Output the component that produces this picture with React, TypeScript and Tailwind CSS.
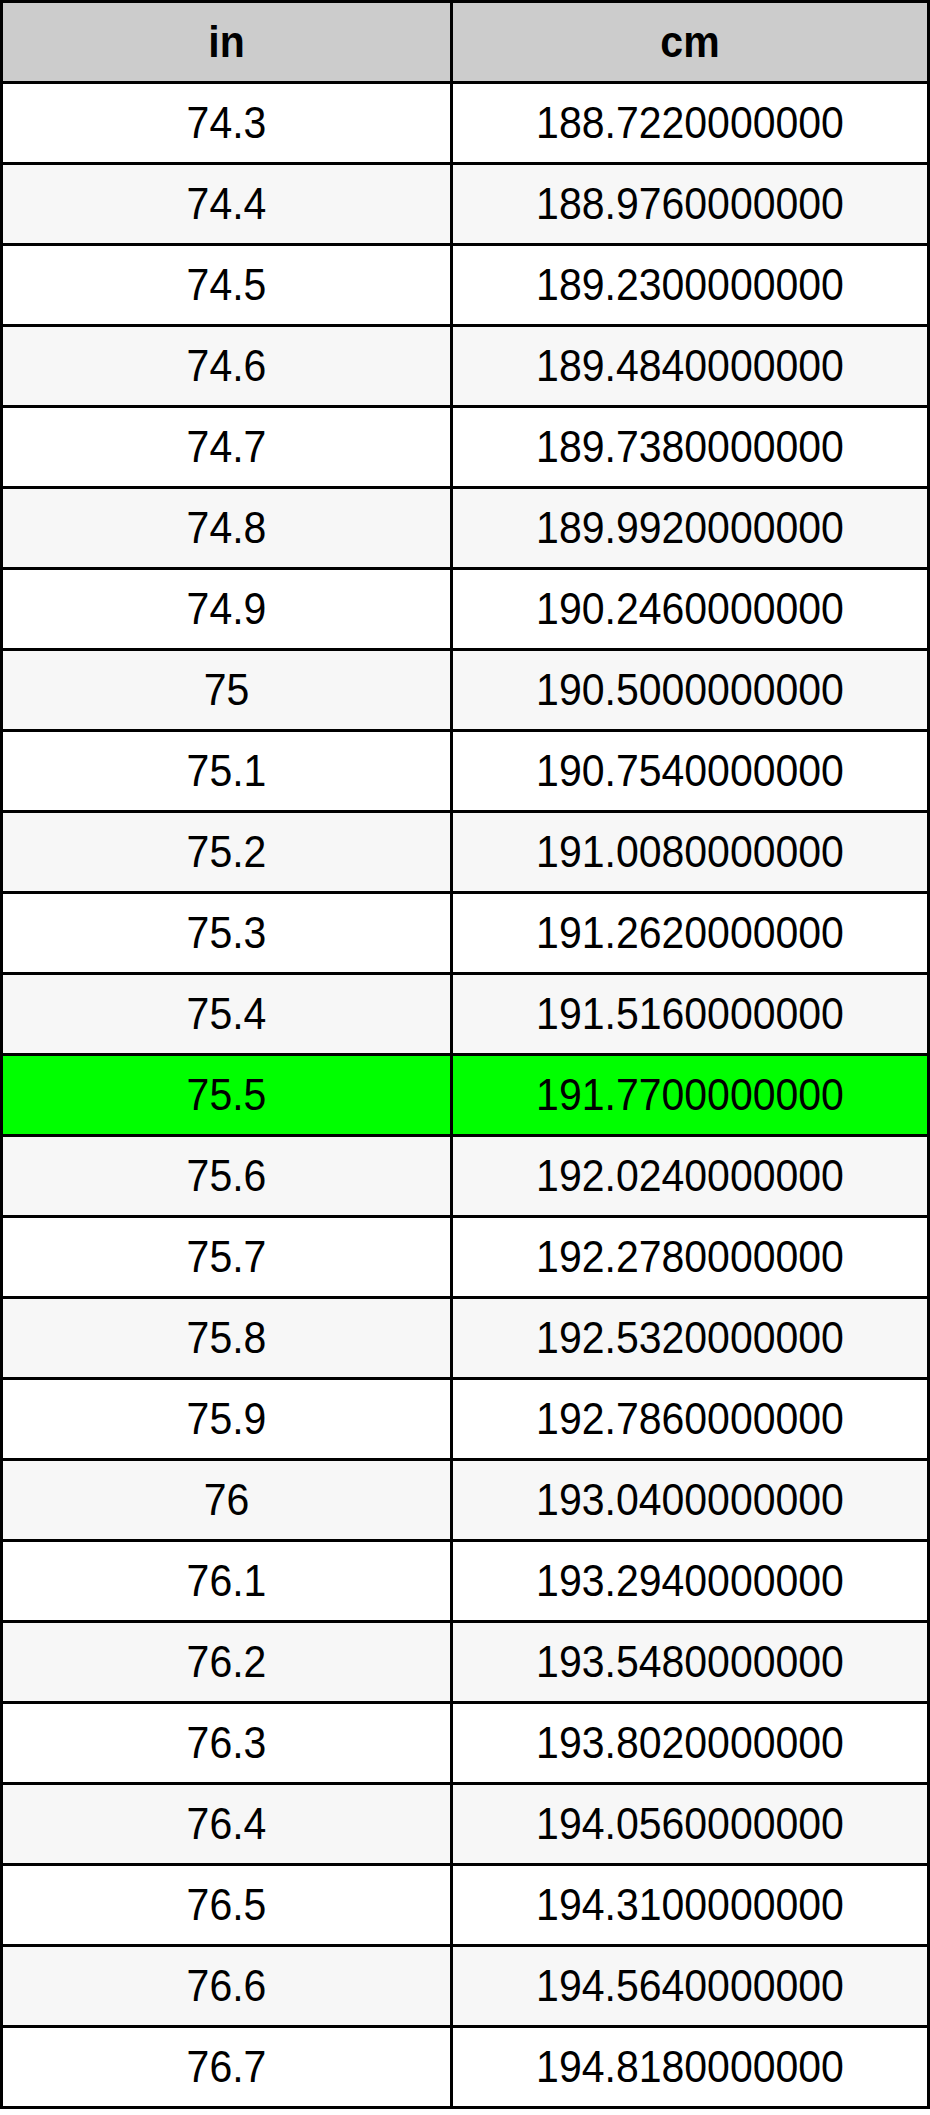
const rows: [string, string][] = [
  ["74.3", "188.7220000000"],
  ["74.4", "188.9760000000"],
  ["74.5", "189.2300000000"],
  ["74.6", "189.4840000000"],
  ["74.7", "189.7380000000"],
  ["74.8", "189.9920000000"],
  ["74.9", "190.2460000000"],
  ["75", "190.5000000000"],
  ["75.1", "190.7540000000"],
  ["75.2", "191.0080000000"],
  ["75.3", "191.2620000000"],
  ["75.4", "191.5160000000"],
  ["75.5", "191.7700000000"],
  ["75.6", "192.0240000000"],
  ["75.7", "192.2780000000"],
  ["75.8", "192.5320000000"],
  ["75.9", "192.7860000000"],
  ["76", "193.0400000000"],
  ["76.1", "193.2940000000"],
  ["76.2", "193.5480000000"],
  ["76.3", "193.8020000000"],
  ["76.4", "194.0560000000"],
  ["76.5", "194.3100000000"],
  ["76.6", "194.5640000000"],
  ["76.7", "194.8180000000"],
]

const App = () => {
  return (
    <div className="w-[930px] bg-white font-['Liberation_Sans',Arial,sans-serif] text-black">
      <table className="w-[930px] border-collapse border-[3px] border-black text-[41px] leading-none">
        <thead>
          <tr className="bg-[#cccccc]">
            <th className="h-[81px] w-[450px] border-[3px] border-black p-0 text-center font-bold">
              <span className="inline-block scale-y-[1.07]">in</span>
            </th>
            <th className="h-[81px] border-[3px] border-black p-0 text-center font-bold">
              <span className="inline-block scale-y-[1.07]">cm</span>
            </th>
          </tr>
        </thead>
        <tbody>
          {rows.map(([inch, cm], i) => {
            // highlighted row is the one being converted
            const bg = inch === "75.5" ? "bg-[#00ff00]" : i % 2 === 0 ? "bg-white" : "bg-[#f7f7f7]"
            return (
              <tr key={inch} className={bg}>
                <td className="h-[81px] border-[3px] border-black p-0 text-center">
                  <span className="inline-block scale-y-[1.07]">{inch}</span>
                </td>
                <td className="h-[81px] border-[3px] border-black p-0 text-center">
                  <span className="inline-block scale-y-[1.07]">{cm}</span>
                </td>
              </tr>
            )
          })}
        </tbody>
      </table>
    </div>
  )
}

export default App
